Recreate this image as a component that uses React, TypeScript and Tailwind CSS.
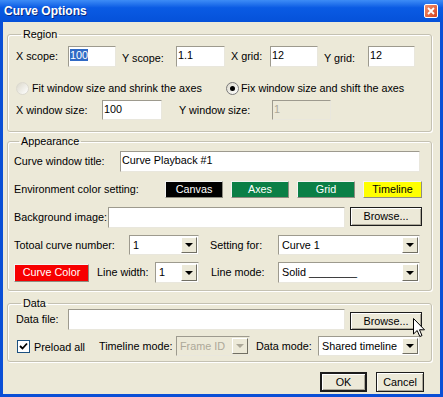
import type { ReactNode } from 'react';

const bevelIn =
  'border border-t-[#9d9a8e] border-l-[#9d9a8e] border-b-[#e9e7dd] border-r-[#e9e7dd]';

function TextBox({ w, h = 'h-[21px]', value = '', selected = false, disabled = false }: {
  w: string;
  h?: string;
  value?: string;
  selected?: boolean;
  disabled?: boolean;
}) {
  return (
    <div
      className={`${w} ${h} ${bevelIn} ${disabled ? 'bg-[#ece9d8] text-[#aca899]' : 'bg-white'} px-[1px] leading-[16px] shrink-0`}
    >
      {selected ? <span className="bg-[#316ac5] text-white">{value}</span> : value}
    </div>
  );
}

function Dropdown({ w, h = 'h-[20px]', value, disabled = false }: {
  w: string;
  h?: string;
  value: ReactNode;
  disabled?: boolean;
}) {
  return (
    <div
      className={`${w} ${h} ${bevelIn} ${disabled ? 'bg-[#ece9d8] text-[#aca899]' : 'bg-white'} flex items-stretch shrink-0 p-[1px]`}
    >
      <span className="flex-1 pl-[2px] flex items-center overflow-hidden">{value}</span>
      <span className="w-[16px] bg-[#ece9d8] border border-t-white border-l-white border-b-[#716f64] border-r-[#716f64] flex items-center justify-center">
        <span
          className={`w-0 h-0 border-l-[4px] border-r-[4px] border-t-[4px] border-l-transparent border-r-transparent ${disabled ? 'border-t-[#aca899]' : 'border-t-black'}`}
        />
      </span>
    </div>
  );
}

function Button({ w, h, children, isDefault = false }: {
  w: string;
  h: string;
  children: ReactNode;
  isDefault?: boolean;
}) {
  return (
    <div
      className={`${w} ${h} ${isDefault ? 'border-2' : 'border'} border-[#1c1c1c] bg-[#ece9d8] flex items-center justify-center shadow-[inset_1px_1px_0_#fff,inset_-1px_-1px_0_#aca899] shrink-0`}
    >
      {children}
    </div>
  );
}

function ColorButton({ w, bg, fg, children }: { w: string; bg: string; fg: string; children: ReactNode }) {
  return (
    <div
      className={`${w} h-[17px] ${bg} ${fg} border border-t-[#f4f4f4] border-l-[#f4f4f4] border-b-[#8e8c80] border-r-[#8e8c80] flex items-center justify-center shrink-0`}
    >
      {children}
    </div>
  );
}

function Radio({ checked = false }: { checked?: boolean }) {
  return (
    <span
      className={`w-[13px] h-[13px] rounded-full bg-gradient-to-br from-[#dcd9cc] to-white border ${checked ? 'border-[#7a7a7a]' : 'border-[#dcdad0]'} flex items-center justify-center shrink-0`}
    >
      {checked && <span className="w-[5px] h-[5px] rounded-full bg-black" />}
    </span>
  );
}

function Group({ title, mt, pl, pb, children }: {
  title: string;
  mt: string;
  pl: string;
  pb: string;
  children: ReactNode;
}) {
  return (
    <fieldset
      className={`${mt} ${pl} ${pb} w-[425px] border border-[#c4c1b2] rounded-[3px] shadow-[1px_1px_0_#fff,inset_1px_1px_0_#fff]`}
    >
      <legend className="ml-[5px] px-[2px] leading-[12px]">{title}</legend>
      {children}
    </fieldset>
  );
}

export default function App() {
  return (
    <div className="relative w-[443px] h-[397px] flex flex-col text-[10.8px] text-black whitespace-nowrap font-['Liberation_Sans',Arial,sans-serif] overflow-hidden">
      {/* Title bar */}
      <div className="h-[22px] flex items-center pl-[4px] pr-[5px] bg-gradient-to-b from-[#3d8cf6] via-[#0a5be4] via-35% to-[#0551d9]">
        <span className="text-white font-bold text-[12px] [text-shadow:1px_1px_0_#0a2a80]">Curve Options</span>
        <span className="ml-auto w-[14px] h-[14px] rounded-[2px] border border-white bg-gradient-to-br from-[#f0906c] to-[#d8401c] flex items-center justify-center">
          <svg width="8" height="8" viewBox="0 0 8 8">
            <path d="M1 1 L7 7 M7 1 L1 7" stroke="white" strokeWidth="1.8" />
          </svg>
        </span>
      </div>

      {/* Body */}
      <div className="flex-1 flex flex-col bg-[#ece9d8] border-x-[3px] border-b-[3px] border-[#0a4fd6] pl-[4px] pr-[8px] pt-[6px]">
        {/* Region */}
        <Group title="Region" mt="mt-0" pl="pl-[8px]" pb="pb-[11px]">
          <div className="mt-[6px] flex items-center h-[21px]">
            <span className="w-[52px]">X scope:</span>
            <TextBox w="w-[48px]" value="100" selected />
            <span className="ml-[6px] w-[54px] pt-[3px]">Y scope:</span>
            <TextBox w="w-[49px]" value="1.1" />
            <span className="ml-[6px] w-[39px]">X grid:</span>
            <TextBox w="w-[48px]" value="12" />
            <span className="ml-[6px] w-[44px] pt-[3px]">Y grid:</span>
            <TextBox w="w-[47px]" value="12" />
          </div>
          <div className="mt-[13px] flex items-center h-[16px]">
            <Radio />
            <span className="ml-[3px] w-[194px]">Fit window size and shrink the axes</span>
            <Radio checked />
            <span className="ml-[2px]">Fix window size and shift the axes</span>
          </div>
          <div className="mt-[4px] flex items-center h-[20px]">
            <span className="w-[86px]">X window size:</span>
            <TextBox w="w-[60px]" h="h-[20px]" value="100" />
            <span className="ml-[17px] w-[93px]">Y window size:</span>
            <TextBox w="w-[59px]" h="h-[20px]" value="1" disabled />
          </div>
        </Group>

        {/* Appearance */}
        <Group title="Appearance" mt="mt-[3px]" pl="pl-[6px]" pb="pb-[7px]">
          <div className="mt-[4px] flex items-center h-[21px]">
            <span className="w-[106px]">Curve window title:</span>
            <TextBox w="w-[300px]" value="Curve Playback #1" />
          </div>
          <div className="mt-[9px] flex items-center h-[17px]">
            <span className="w-[151px]">Environment color setting:</span>
            <ColorButton w="w-[58px]" bg="bg-black" fg="text-white">Canvas</ColorButton>
            <span className="w-[8px]" />
            <ColorButton w="w-[58px]" bg="bg-[#0a7f46]" fg="text-white">Axes</ColorButton>
            <span className="w-[8px]" />
            <ColorButton w="w-[58px]" bg="bg-[#0a7f46]" fg="text-white">Grid</ColorButton>
            <span className="w-[8px]" />
            <ColorButton w="w-[59px]" bg="bg-[#ffff00]" fg="text-black">Timeline</ColorButton>
          </div>
          <div className="mt-[9px] flex items-start h-[21px]">
            <span className="w-[94px] self-center">Background image:</span>
            <TextBox w="w-[237px]" />
            <span className="ml-[5px]">
              <Button w="w-[72px]" h="h-[19px]">Browse...</Button>
            </span>
          </div>
          <div className="mt-[7px] flex items-center h-[20px]">
            <span className="w-[115px]">Totoal curve number:</span>
            <Dropdown w="w-[70px]" value="1" />
            <span className="ml-[11px] w-[68px]">Setting for:</span>
            <Dropdown w="w-[142px]" value="Curve 1" />
          </div>
          <div className="mt-[7px] flex items-center h-[21px]">
            <div className="w-[75px] h-[18px] bg-[#f70000] text-white border border-t-[#f4f4f4] border-l-[#f4f4f4] border-b-[#8e8c80] border-r-[#8e8c80] flex items-center justify-center">
              Curve Color
            </div>
            <span className="ml-[8px] w-[58px]">Line width:</span>
            <Dropdown w="w-[44px]" h="h-[21px]" value="1" />
            <span className="ml-[12px] w-[67px]">Line mode:</span>
            <Dropdown w="w-[142px]" h="h-[21px]" value="Solid ________" />
          </div>
        </Group>

        {/* Data */}
        <Group title="Data" mt="mt-[6px]" pl="pl-[8px]" pb="pb-[5px]">
          <div className="flex items-start h-[21px]">
            <span className="w-[52px] self-center">Data file:</span>
            <TextBox w="w-[277px]" />
            <span className="ml-[5px] mt-[3px]">
              <Button w="w-[72px]" h="h-[18px]">Browse...</Button>
            </span>
          </div>
          <div className="mt-[6px] flex items-center h-[20px]">
            <span className="ml-[1px] w-[13px] h-[13px] bg-white border border-[#1c5180] flex items-center justify-center">
              <svg width="9" height="9" viewBox="0 0 9 9">
                <path d="M1 4 L3.5 6.5 L8 1.5" fill="none" stroke="black" strokeWidth="1.8" />
              </svg>
            </span>
            <span className="ml-[4px] w-[65px] pt-[2px]">Preload all</span>
            <span className="w-[77px]">Timeline mode:</span>
            <Dropdown w="w-[74px]" value="Frame ID" disabled />
            <span className="ml-[6px] w-[62px]">Data mode:</span>
            <Dropdown w="w-[102px]" value="Shared timeline" />
          </div>
        </Group>

        {/* Footer buttons */}
        <div className="mt-[10px] flex justify-end pr-[8px] gap-[9px]">
          <Button w="w-[47px]" h="h-[20px]" isDefault>OK</Button>
          <Button w="w-[48px]" h="h-[20px]">Cancel</Button>
        </div>
      </div>

      {/* Mouse cursor */}
      <svg className="absolute left-[413px] top-[318px]" width="13" height="20" viewBox="0 0 13 20">
        <path d="M0.5 0.5 L0.5 16 L4.2 12.5 L6.8 18.5 L9 17.6 L6.5 11.8 L11.5 11.8 Z" fill="white" stroke="black" strokeWidth="1" />
      </svg>
    </div>
  );
}
